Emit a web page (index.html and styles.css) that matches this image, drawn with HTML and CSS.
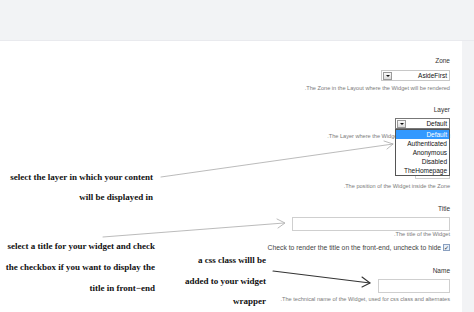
FILE: index.html
```html
<!DOCTYPE html>
<html>
<head>
<meta charset="utf-8">
<link rel="stylesheet" href="styles.css">
</head>
<body>
<div class="page">
  <div class="topband"></div>
  <div class="main">
    <div class="panel">
      <div class="form">
        <div class="group g-zone">
          <div class="label">Zone</div>
          <div class="select sel-zone"><span class="btn"><span class="tri"></span></span><span class="val">AsideFirst</span></div>
          <div class="help">The Zone in the Layout where the Widget will be rendered.</div>
        </div>
        <div class="group g-layer">
          <div class="label">Layer</div>
          <div class="select sel-layer"><span class="btn"><span class="tri"></span></span><span class="val">Default</span></div>
          <div class="help">The Layer where the Widget should be displayed.</div>
          <ul class="dropdown">
            <li class="active">Default</li>
            <li>Authenticated</li>
            <li>Anonymous</li>
            <li>Disabled</li>
            <li>TheHomepage</li>
          </ul>
        </div>
        <div class="group g-pos">
          <div class="label-space"></div>
          <div class="input in-pos"></div>
          <div class="help">The position of the Widget inside the Zone.</div>
        </div>
        <div class="group g-title">
          <div class="label">Title</div>
          <div class="input in-title"></div>
          <div class="help help-tight">The title of the Widget.</div>
          <div class="check"><span class="box">✓</span><span class="check-text">Check to render the title on the front-end, uncheck to hide</span></div>
        </div>
        <div class="group g-name">
          <div class="label">Name</div>
          <div class="input in-name"></div>
          <div class="help help-name">The technical name of the Widget, used for css class and alternates.</div>
        </div>
      </div>
    </div>
  </div>

  <div class="note note-layer">select the layer in which your content<br>will be displayed in</div>
  <div class="note note-title">select a title for your widget and check<br>the checkbox if you want to display the<br>title in front−end</div>
  <div class="note note-css">a css class willl be<br>added to your widget<br>wrapper</div>

  <svg class="arrows" width="474" height="312" viewBox="0 0 474 312">
    <g fill="none" stroke-linecap="round" stroke-linejoin="round">
      <line x1="161" y1="177" x2="393" y2="144" stroke="#a9a9a9" stroke-width="0.8"/>
      <polyline points="384,141 393,144 387,149" stroke="#a9a9a9" stroke-width="0.8"/>
      <line x1="103" y1="237" x2="284" y2="223" stroke="#a9a9a9" stroke-width="0.8"/>
      <polyline points="277,219 285,223 278,228" stroke="#a9a9a9" stroke-width="0.8"/>
      <line x1="273" y1="271" x2="370" y2="283" stroke="#333" stroke-width="1.1"/>
      <polyline points="362,277 370,283 362,287" stroke="#333" stroke-width="1.1"/>
    </g>
  </svg>
</div>
</body>
</html>
```

FILE: styles.css
```css
* { box-sizing: border-box; }
html, body { margin: 0; padding: 0; }
body { width: 474px; height: 312px; overflow: hidden; background: #f2f3f5; }

.page { position: relative; width: 474px; height: 312px; display: flex; flex-direction: column; }
.topband { height: 41px; background: #f2f3f5; border-bottom: 1px solid #e9eaee; flex: none; }
.main { flex: 1; display: flex; }
.panel { width: 462px; background: #fff; }

.form {
  direction: rtl;
  display: flex;
  flex-direction: column;
  align-items: flex-start;
  padding: 16px 12px 0 0;
  font-family: "Liberation Sans", Arial, sans-serif;
  color: #333;
}
.group { display: flex; flex-direction: column; align-items: flex-start; position: relative; width: 100%; }
.g-layer { margin-top: 14px; }
.g-pos { margin-top: 13px; }
.g-title { margin-top: 15px; }
.g-name { margin-top: 15px; }

.label { font-size: 6.5px; line-height: 8px; height: 8px; color: #333; }
.label-space { height: 8px; }
.help { font-size: 5.6px; line-height: 7px; height: 7px; color: #7a7a7a; margin-top: 4px; white-space: nowrap; }
.help-tight { margin-top: 0; }
.help-name { margin-top: 3px; }

.select {
  direction: ltr;
  margin-top: 5px;
  height: 11px;
  border: 1px solid #c8c8c8;
  background: #fff;
  display: flex;
  align-items: center;
  justify-content: space-between;
  padding: 0 1px 0 1px;
}
.sel-zone { width: 69px; }
.sel-layer { width: 55px; margin-top: 4px; border-color: #777; }
.btn {
  width: 9px; height: 8px;
  border: 1px solid #9a9a9a;
  background: linear-gradient(#fafafa, #dcdcdc);
  display: flex; align-items: center; justify-content: center;
}
.tri { width: 0; height: 0; border-left: 2px solid transparent; border-right: 2px solid transparent; border-top: 2.5px solid #111; }
.val { font-size: 6.5px; line-height: 9px; color: #111; padding-right: 1px; }

.dropdown {
  direction: ltr;
  position: absolute;
  top: 23px; right: 0;
  width: 55px; height: 47px;
  margin: 0; padding: 0;
  list-style: none;
  background: #fff;
  border: 1px solid #555;
  font-size: 6.5px;
  color: #111;
  z-index: 2;
}
.dropdown li { height: 9px; line-height: 9px; text-align: right; padding-right: 2px; }
.dropdown li.active { background: #3399ff; color: #fff; }

.input { margin-top: 4px; border: 1px solid #cfcfcf; background: #fff; }
.in-pos { width: 35px; height: 13px; margin-top: 5px; }
.in-title { width: 158px; height: 14px; }
.in-name { width: 72px; height: 14px; }

.check { display: flex; align-items: center; margin-top: 5px; height: 9px; }
.check-text { font-size: 6.8px; color: #444; white-space: nowrap; }
.box {
  width: 7px; height: 7px; margin-left: 2px;
  border: 1px solid #8aa0c0;
  background: #e6eef8;
  font-size: 6px; line-height: 5px; color: #234;
  text-align: center; direction: ltr;
  font-family: "DejaVu Sans", sans-serif;
}

.note {
  position: absolute;
  font-family: "Liberation Serif", "Times New Roman", serif;
  font-weight: bold;
  font-size: 9px;
  color: #111;
  text-align: right;
  white-space: nowrap;
}
.note-layer { right: 321px; top: 167px; line-height: 20px; }
.note-title { right: 319px; top: 236px; line-height: 21px; }
.note-css { right: 208px; top: 250px; line-height: 20.5px; }

.arrows { position: absolute; left: 0; top: 0; pointer-events: none; }
```
